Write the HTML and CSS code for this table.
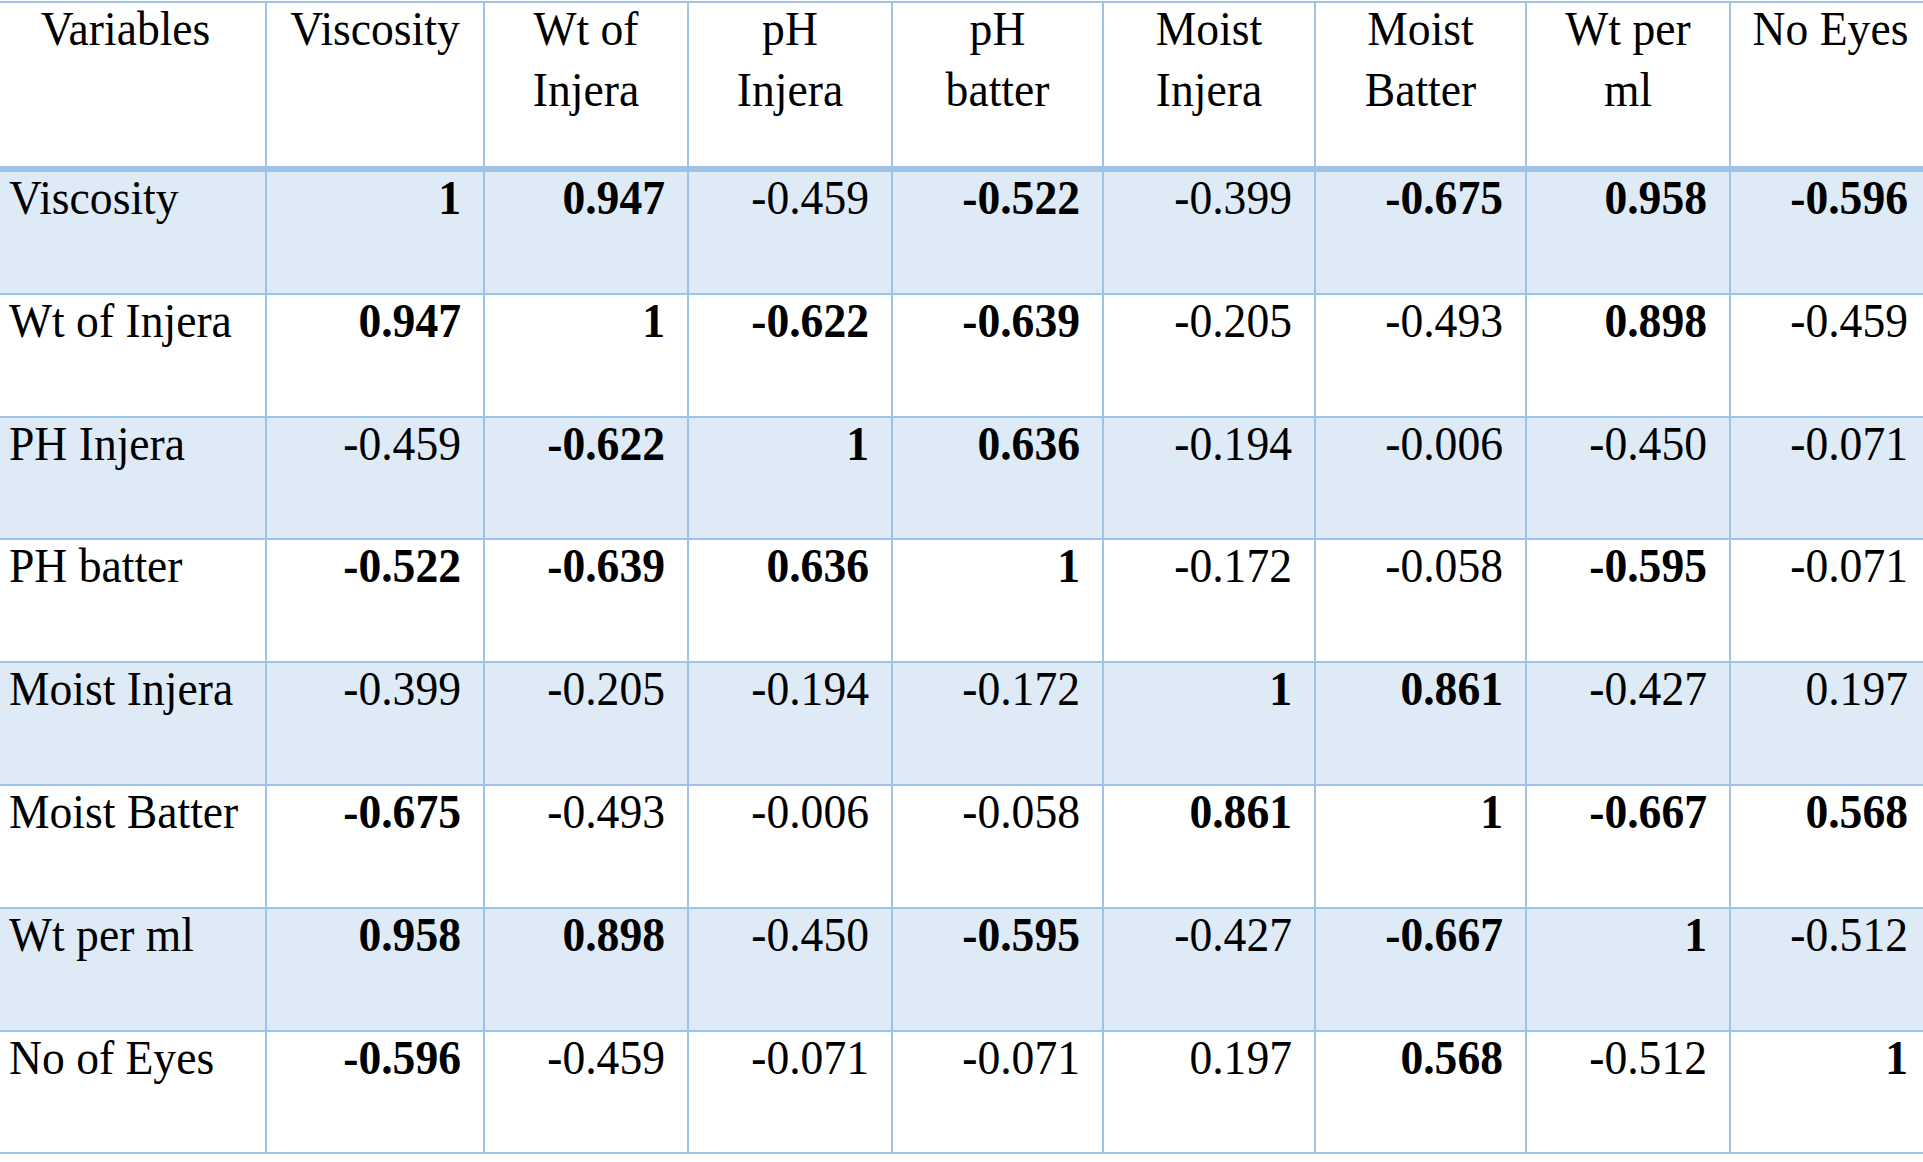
FILE: index.html
```html
<!DOCTYPE html>
<html lang="en">
<head>
<meta charset="utf-8">
<title>Correlation matrix</title>
<link rel="stylesheet" href="styles.css">
</head>
<body>
<div class="matrix" role="table">
  <div class="row head" role="row">
    <div class="cell hc first" role="columnheader"><span class="t">Variables</span></div>
    <div class="cell hc" role="columnheader"><span class="t">Viscosity</span></div>
    <div class="cell hc" role="columnheader"><span class="t">Wt of<br>Injera</span></div>
    <div class="cell hc" role="columnheader"><span class="t">pH<br>Injera</span></div>
    <div class="cell hc" role="columnheader"><span class="t">pH<br>batter</span></div>
    <div class="cell hc" role="columnheader"><span class="t">Moist<br>Injera</span></div>
    <div class="cell hc" role="columnheader"><span class="t">Moist<br>Batter</span></div>
    <div class="cell hc" role="columnheader"><span class="t">Wt per<br>ml</span></div>
    <div class="cell hc" role="columnheader"><span class="t">No Eyes</span></div>
  </div>

  <div class="row shade" role="row">
    <div class="cell lbl"><span class="t">Viscosity</span></div>
    <div class="cell num"><b class="t">1</b></div>
    <div class="cell num"><b class="t">0.947</b></div>
    <div class="cell num"><span class="t">-0.459</span></div>
    <div class="cell num"><b class="t">-0.522</b></div>
    <div class="cell num"><span class="t">-0.399</span></div>
    <div class="cell num"><b class="t">-0.675</b></div>
    <div class="cell num"><b class="t">0.958</b></div>
    <div class="cell num"><b class="t">-0.596</b></div>
  </div>

  <div class="row" role="row">
    <div class="cell lbl"><span class="t">Wt of Injera</span></div>
    <div class="cell num"><b class="t">0.947</b></div>
    <div class="cell num"><b class="t">1</b></div>
    <div class="cell num"><b class="t">-0.622</b></div>
    <div class="cell num"><b class="t">-0.639</b></div>
    <div class="cell num"><span class="t">-0.205</span></div>
    <div class="cell num"><span class="t">-0.493</span></div>
    <div class="cell num"><b class="t">0.898</b></div>
    <div class="cell num"><span class="t">-0.459</span></div>
  </div>

  <div class="row shade" role="row">
    <div class="cell lbl"><span class="t">PH Injera</span></div>
    <div class="cell num"><span class="t">-0.459</span></div>
    <div class="cell num"><b class="t">-0.622</b></div>
    <div class="cell num"><b class="t">1</b></div>
    <div class="cell num"><b class="t">0.636</b></div>
    <div class="cell num"><span class="t">-0.194</span></div>
    <div class="cell num"><span class="t">-0.006</span></div>
    <div class="cell num"><span class="t">-0.450</span></div>
    <div class="cell num"><span class="t">-0.071</span></div>
  </div>

  <div class="row" role="row">
    <div class="cell lbl"><span class="t">PH batter</span></div>
    <div class="cell num"><b class="t">-0.522</b></div>
    <div class="cell num"><b class="t">-0.639</b></div>
    <div class="cell num"><b class="t">0.636</b></div>
    <div class="cell num"><b class="t">1</b></div>
    <div class="cell num"><span class="t">-0.172</span></div>
    <div class="cell num"><span class="t">-0.058</span></div>
    <div class="cell num"><b class="t">-0.595</b></div>
    <div class="cell num"><span class="t">-0.071</span></div>
  </div>

  <div class="row shade" role="row">
    <div class="cell lbl"><span class="t">Moist Injera</span></div>
    <div class="cell num"><span class="t">-0.399</span></div>
    <div class="cell num"><span class="t">-0.205</span></div>
    <div class="cell num"><span class="t">-0.194</span></div>
    <div class="cell num"><span class="t">-0.172</span></div>
    <div class="cell num"><b class="t">1</b></div>
    <div class="cell num"><b class="t">0.861</b></div>
    <div class="cell num"><span class="t">-0.427</span></div>
    <div class="cell num"><span class="t">0.197</span></div>
  </div>

  <div class="row" role="row">
    <div class="cell lbl"><span class="t">Moist Batter</span></div>
    <div class="cell num"><b class="t">-0.675</b></div>
    <div class="cell num"><span class="t">-0.493</span></div>
    <div class="cell num"><span class="t">-0.006</span></div>
    <div class="cell num"><span class="t">-0.058</span></div>
    <div class="cell num"><b class="t">0.861</b></div>
    <div class="cell num"><b class="t">1</b></div>
    <div class="cell num"><b class="t">-0.667</b></div>
    <div class="cell num"><b class="t">0.568</b></div>
  </div>

  <div class="row shade" role="row">
    <div class="cell lbl"><span class="t">Wt per ml</span></div>
    <div class="cell num"><b class="t">0.958</b></div>
    <div class="cell num"><b class="t">0.898</b></div>
    <div class="cell num"><span class="t">-0.450</span></div>
    <div class="cell num"><b class="t">-0.595</b></div>
    <div class="cell num"><span class="t">-0.427</span></div>
    <div class="cell num"><b class="t">-0.667</b></div>
    <div class="cell num"><b class="t">1</b></div>
    <div class="cell num"><span class="t">-0.512</span></div>
  </div>

  <div class="row" role="row">
    <div class="cell lbl"><span class="t">No of Eyes</span></div>
    <div class="cell num"><b class="t">-0.596</b></div>
    <div class="cell num"><span class="t">-0.459</span></div>
    <div class="cell num"><span class="t">-0.071</span></div>
    <div class="cell num"><span class="t">-0.071</span></div>
    <div class="cell num"><span class="t">0.197</span></div>
    <div class="cell num"><b class="t">0.568</b></div>
    <div class="cell num"><span class="t">-0.512</span></div>
    <div class="cell num"><b class="t">1</b></div>
  </div>
</div>
</body>
</html>
```
FILE: styles.css
```css
html, body {
  margin: 0;
  padding: 0;
  background: #ffffff;
  overflow: hidden;
}

body {
  font-family: "Liberation Serif", "Times New Roman", serif;
  font-size: 48px;
  color: #000000;
}

.matrix {
  margin-top: 1px;
  width: 1932px;
  border-top: 2px solid #9dc3e6;
  display: grid;
  grid-template-rows: 169px repeat(8, 122.8px);
}

.row {
  display: grid;
  grid-template-columns: 267px 218px 204px 204px 211px 212px 211px 204px 201px;
}

.row.shade .cell {
  background: #deeaf6;
}

.cell {
  box-sizing: border-box;
  border-right: 2px solid #9dc3e6;
  border-bottom: 2px solid #9dc3e6;
  line-height: 52px;
  white-space: nowrap;
  overflow: hidden;
}

.t {
  display: inline-block;
  transform: scaleX(0.95);
  font-weight: normal;
}

b.t {
  font-weight: bold;
}

/* header */
.hc {
  border-bottom-width: 6px;
  text-align: center;
  line-height: 61px;
}

.hc .t {
  display: block;
  margin-top: -5px;
  transform-origin: center top;
}

.hc.first {
  padding-right: 14px;
}

/* label column */
.lbl {
  padding-left: 9px;
  text-align: left;
}

.lbl .t {
  transform-origin: left center;
}

/* numeric cells */
.num {
  padding-right: 22px;
  text-align: right;
}

.num .t {
  transform-origin: right center;
}
```
